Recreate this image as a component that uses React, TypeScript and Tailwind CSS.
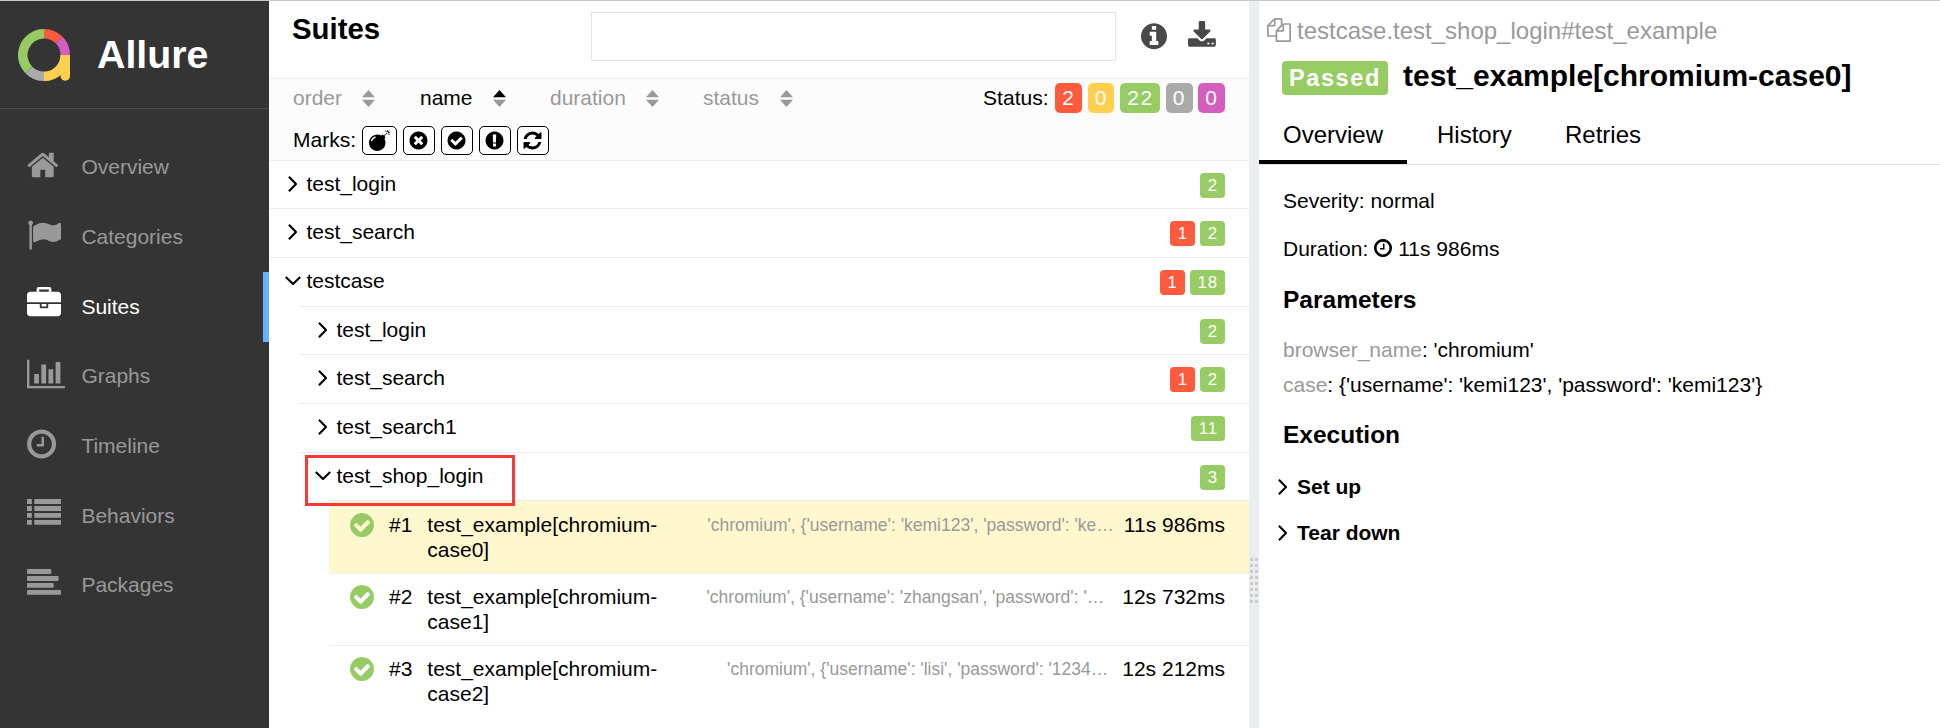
import React from 'react';

const DISC =
  'm768 768q0 209-103 385.5t-279.5 279.5-385.5 103-385.5-103-279.5-279.5-103-385.5 103-385.5 279.5-279.5 385.5-103 385.5 103 279.5 279.5 103 385.5z';
const CIRCLE = `M896 128${DISC}`;

const ICONS = {
  home: 'M1472 992v480q0 26-19 45t-45 19h-384v-384h-256v384h-384q-26 0-45-19t-19-45v-480q0-1 .5-3t.5-3l575-474 575 474q1 2 1 6zm223-69l-62 74q-8 9-21 11h-3q-13 0-21-7l-692-577-692 577q-12 8-24 7-13-2-21-11l-62-74q-8-10-7-23.5t11-21.5l719-599q32-26 76-26t76 26l244 204v-195q0-14 9-23t23-9h192q14 0 23 9t9 23v408l219 182q10 8 11 21.5t-7 23.5z',
  flag: 'M320 256q0 72-64 110v1266q0 13-9.5 22.5t-22.5 9.5h-64q-13 0-22.5-9.5t-9.5-22.5v-1266q-64-38-64-110 0-53 37.5-90.5t90.5-37.5 90.5 37.5 37.5 90.5zm1472 64v763q0 25-12.5 38.5t-39.5 27.5q-215 116-369 116-61 0-123.5-22t-108.5-48-115.5-48-142.5-22q-192 0-464 146-17 9-33 9-26 0-45-19t-19-45v-742q0-32 31-55 21-14 79-43 236-120 421-120 107 0 200 29t219 88q38 19 88 19 54 0 117.5-21t110-47 88-47 54.5-21q26 0 45 19t19 45z',
  briefcase:
    'M640 256h512v-128h-512v128zm1152 640v480q0 66-47 113t-113 47h-1472q-66 0-113-47t-47-113v-480h672v160q0 26 19 45t45 19h320q26 0 45-19t19-45v-160h672zm-768 0v128h-256v-128h256zm768-480v384h-1792v-384q0-66 47-113t113-47h352v-160q0-40 28-68t68-28h576q40 0 68 28t28 68v160h352q66 0 113 47t47 113z',
  chart:
    'M640 896v512h-256v-512h256zm384-512v1024h-256v-1024h256zm1024 1152v128h-2048v-1536h128v1408h1920zm-640-896v768h-256v-768h256zm384-384v1152h-256v-1152h256z',
  clock: `M1024 544v448q0 14-9 23t-23 9h-320q-14 0-23-9t-9-23v-64q0-14 9-23t23-9h224v-352q0-14 9-23t23-9h64q14 0 23 9t9 23zm416 352q0-148-73-273t-198-198-273-73-273 73-198 198-73 273 73 273 198 198 273 73 273-73 198-198 73-273z${CIRCLE}`,
  list: 'M0 160h256v256h-256zM384 160h1408v256h-1408zM0 528h256v256h-256zM384 528h1408v256h-1408zM0 896h256v256h-256zM384 896h1408v256h-1408zM0 1264h256v256h-256zM384 1264h1408v256h-1408z',
  align:
    'M48 160h1184q48 0 48 48v160q0 48-48 48h-1184q-48 0-48-48v-160q0-48 48-48zM48 528h1568q48 0 48 48v160q0 48-48 48h-1568q-48 0-48-48v-160q0-48 48-48zM48 896h1312q48 0 48 48v160q0 48-48 48h-1312q-48 0-48-48v-160q0-48 48-48zM48 1264h1696q48 0 48 48v160q0 48-48 48h-1696q-48 0-48-48v-160q0-48 48-48z',
  info: `M1152 1376v-160q0-14-9-23t-23-9h-96v-512q0-14-9-23t-23-9h-320q-14 0-23 9t-9 23v160q0 14 9 23t23 9h96v320h-96q-14 0-23 9t-9 23v160q0 14 9 23t23 9h448q14 0 23-9t9-23zm-128-896v-160q0-14-9-23t-23-9h-192q-14 0-23 9t-9 23v160q0 14 9 23t23 9h192q14 0 23-9t9-23z${CIRCLE}`,
  download:
    'M1344 1344q0-26-19-45t-45-19-45 19-19 45 19 45 45 19 45-19 19-45zm256 0q0-26-19-45t-45-19-45 19-19 45 19 45 45 19 45-19 19-45zm128-224v320q0 40-28 68t-68 28h-1472q-40 0-68-28t-28-68v-320q0-40 28-68t68-28h465l135 136q58 56 136 56t136-56l136-136h464q40 0 68 28t28 68zm-325-569q17 41-14 70l-448 448q-18 19-45 19t-45-19l-448-448q-31-29-14-70 17-39 59-39h256v-448q0-26 19-45t45-19h256q26 0 45 19t19 45v448h256q42 0 59 39z',
  bomb: 'M571 589q-10-25-34-35t-49 0q-108 44-191 127t-127 191q-10 25 0 49t35 34q13 5 24 5 42 0 60-40 34-84 98.5-148.5t148.5-98.5q25-11 35-35t0-49zm942-356l46 46-244 243 68 68q19 19 19 45.5t-19 45.5l-64 64q89 161 89 343 0 143-55.5 273.5t-150 225-225 150-273.5 55.5-273.5-55.5-225-150-150-225-55.5-273.5 55.5-273.5 150-225 225-150 273.5-55.5q182 0 343 89l64-64q19-19 45.5-19t45.5 19l68 68zm8-56q-10 10-22 10-13 0-23-10l-91-90q-9-10-9-23t9-23q10-9 23-9t23 9l90 91q10 9 10 22.5t-10 22.5zm230 230q-11 9-23 9t-23-9l-90-91q-10-9-10-22.5t10-22.5q9-10 22.5-10t22.5 10l91 90q9 10 9 23t-9 23zm41-183q0 14-9 23t-23 9h-96q-14 0-23-9t-9-23 9-23 23-9h96q14 0 23 9t9 23zm-192-192v96q0 14-9 23t-23 9-23-9-9-23v-96q0-14 9-23t23-9 23 9 9 23zm151 55l-91 90q-10 10-22 10-13 0-23-10-10-9-10-22.5t10-22.5l90-91q10-9 23-9t23 9q9 10 9 23t-9 23z',
  times: `M1277 1122q0-26-19-45l-181-181 181-181q19-19 19-45 0-27-19-46l-90-90q-19-19-46-19-26 0-45 19l-181 181-181-181q-19-19-45-19-27 0-46 19l-90 90q-19 19-19 46 0 26 19 45l181 181-181 181q-19 19-19 45 0 27 19 46l90 90q19 19 46 19 26 0 45-19l181-181 181 181q19 19 45 19 27 0 46-19l90-90q19-19 19-46z${CIRCLE}`,
  check: `M1412 734q0-28-18-46l-91-90q-19-19-45-19t-45 19l-408 407-226-226q-19-19-45-19t-45 19l-91 90q-18 18-18 46 0 27 18 45l362 362q19 19 45 19 27 0 46-19l543-543q18-18 18-45z${CIRCLE}`,
  exclamation: `${CIRCLE}M1024 1375v-190q0-14-9-23.5t-22-9.5h-192q-13 0-23 10t-10 23v190q0 13 10 23t23 10h192q13 0 22-9.5t9-23.5zm-2-344l18-621q0-12-10-18-10-8-24-8h-220q-14 0-24 8-10 6-10 18l17 621q0 10 10 17.5t24 7.5h185q14 0 23.5-7.5t10.5-17.5z`,
  refresh:
    'M1639 1056q0 5-1 7-64 268-268 434.5t-478 166.5q-146 0-282.5-55t-243.5-157l-129 129q-19 19-45 19t-45-19-19-45v-448q0-26 19-45t45-19h448q26 0 45 19t19 45-19 45l-137 137q71 66 161 102t187 36q134 0 250-65t186-179q11-17 53-117 8-23 30-23h192q13 0 22.5 9.5t9.5 22.5zm25-800v448q0 26-19 45t-45 19h-448q-26 0-45-19t-19-45 19-45l138-138q-148-137-349-137-134 0-250 65t-186 179q-11 17-53 117-8 23-30 23h-199q-13 0-22.5-9.5t-9.5-22.5v-7q65-268 270-434.5t480-166.5q146 0 284 55.5t245 156.5l130-129q19-19 45-19t45 19 19 45z',
  files:
    'M1696 384q40 0 68 28t28 68v1216q0 40-28 68t-68 28h-960q-40 0-68-28t-28-68v-288h-544q-40 0-68-28t-28-68v-672q0-40 20-88t48-76l408-408q28-28 76-48t88-20h416q40 0 68 28t28 68v328q68-40 128-40h416zm-544 213l-299 299h299v-299zm-640-384l-299 299h299v-299zm196 647l316-316v-416h-384v416q0 40-28 68t-68 28h-416v640h512v-256q0-40 20-88t48-76zm956 804v-1152h-384v416q0 40-28 68t-68 28h-416v640h896z',
};

type IconName = keyof typeof ICONS;

function Icon({ name, box = '0 0 1792 1792', className }: { name: IconName; box?: string; className: string }) {
  return (
    <svg viewBox={box} className={className} fill="currentColor" fillRule="evenodd" aria-hidden="true">
      <path d={ICONS[name]} />
    </svg>
  );
}

function Logo() {
  return (
    <svg viewBox="0 0 52 52" className="h-[52px] w-[52px] shrink-0" fill="none" strokeWidth="9.5" aria-hidden="true">
      <path d="M26 4.75A21.25 21.25 0 0 1 41.03 10.97" stroke="#fd5a3e" />
      <path d="M41.03 10.97A21.25 21.25 0 0 1 47.25 26" stroke="#d35ebe" />
      <path d="M10.97 41.03A21.25 21.25 0 0 1 26 4.75" stroke="#97cc64" />
      <path d="M26 47.25A21.25 21.25 0 0 1 10.97 41.03" stroke="#aaa" />
      <path d="M47.25 26A21.25 21.25 0 0 1 26 47.25" stroke="#ffd050" />
      <path d="M42.5 26H52V47A4.75 4.75 0 0 1 42.5 47Z" fill="#ffd050" stroke="none" />
    </svg>
  );
}

const NAV: { label: string; icon: IconName; box?: string; wide?: boolean }[] = [
  { label: 'Overview', icon: 'home', box: '64 0 1792 1792' },
  { label: 'Categories', icon: 'flag' },
  { label: 'Suites', icon: 'briefcase' },
  { label: 'Graphs', icon: 'chart', box: '0 0 2048 1792', wide: true },
  { label: 'Timeline', icon: 'clock', box: '128 0 1792 1792' },
  { label: 'Behaviors', icon: 'list' },
  { label: 'Packages', icon: 'align' },
];

function Sidebar() {
  return (
    <aside className="flex w-[269px] shrink-0 flex-col bg-[#343434]">
      <div className="flex h-[108px] items-center gap-[27px] border-b border-[#4d4d4d] pl-[18px]">
        <Logo />
        <span className="text-[39.3px] leading-none font-bold text-white">Allure</span>
      </div>
      <nav className="pt-[23.7px]">
        {NAV.map((item) => {
          const active = item.label === 'Suites';
          return (
            <div
              key={item.label}
              className={
                active
                  ? 'flex h-[69.67px] border-r-[6px] border-[#63b3ff] pl-[27px] text-white'
                  : 'flex h-[69.67px] pl-[27px] text-[#999]'
              }
            >
              <div className="w-[54.4px] shrink-0 pt-[15.3px]">
                <Icon name={item.icon} box={item.box} className={item.wide ? 'h-[34px] w-[38.2px]' : 'h-[34px] w-[34px]'} />
              </div>
              <span className="pt-[22.6px] text-[21px] leading-6">{item.label}</span>
            </div>
          );
        })}
      </nav>
    </aside>
  );
}

function Sorter({ label, up = false, className }: { label: string; up?: boolean; className: string }) {
  return (
    <div className={className}>
      <span>{label}</span>
      <svg viewBox="0 0 13 17" className="mt-1 h-[17px] w-[13px]" aria-hidden="true">
        <path d="M6.5 0L13 7.2H0z" fill={up ? '#000' : '#999'} />
        <path d="M6.5 17L13 9.8H0z" fill="#999" />
      </svg>
    </div>
  );
}

function Mark({ icon }: { icon: IconName }) {
  return (
    <div
      className={
        icon === 'bomb'
          ? 'flex h-[29px] w-[35px] items-center justify-center rounded-[5px] border border-black bg-white'
          : 'flex h-[29px] w-[32px] items-center justify-center rounded-[5px] border border-black bg-white'
      }
    >
      <Icon name={icon} className="h-[21px] w-[21px]" />
    </div>
  );
}

function StatusCount({ n, color }: { n: number; color: string }) {
  return (
    <span className={`flex h-[30px] items-center rounded-[5px] pr-[6.5px] pl-[7.2px] tracking-[1.5px] text-white ${color}`}>{n}</span>
  );
}

function Chevron({ open = false, thin = false }: { open?: boolean; thin?: boolean }) {
  return open ? (
    <svg viewBox="0 0 16 9" className="mt-[18px] h-[9px] w-4" fill="none" stroke="#000" strokeWidth="2.1" aria-hidden="true">
      <path d="M.8.9L8 8L15.2.9" />
    </svg>
  ) : (
    <svg
      viewBox="0 0 9 16"
      className={thin ? 'h-4 w-[9px]' : 'mt-[15px] ml-[3px] h-4 w-[9px]'}
      fill="none"
      stroke="#000"
      strokeWidth="2.1"
      aria-hidden="true"
    >
      <path d="M.9.8L8 8L.9 15.2" />
    </svg>
  );
}

function SuiteRow({
  name,
  failed,
  passed,
  open,
  className,
}: {
  name: string;
  failed?: number;
  passed: number;
  open?: boolean;
  className: string;
}) {
  return (
    <div className={`flex items-start border-[#eceff1] pr-6 ${className}`}>
      <div className="flex w-[21.4px] shrink-0">
        <Chevron open={open} />
      </div>
      <span className="flex-1 pt-[11px] leading-6">{name}</span>
      <div className="flex gap-[5px] pt-3 text-[16.8px] tracking-[1px] text-white">
        {failed ? <span className="flex h-[25px] items-center rounded-[4px] bg-[#fd5a3e] pr-[6.9px] pl-[7.7px]">{failed}</span> : null}
        <span className="flex h-[25px] items-center rounded-[4px] bg-[#97cc64] pr-[6.9px] pl-[7.7px]">{passed}</span>
      </div>
    </div>
  );
}

function CaseRow({
  n,
  name,
  params,
  time,
  className,
  gap,
}: {
  n: number;
  name: string[];
  params: string;
  time: string;
  className: string;
  gap: string;
}) {
  return (
    <div className={`flex items-start pr-6 pl-[21px] leading-[25px] ${className}`}>
      <Icon name="check" box="128 128 1536 1536" className="mt-px h-6 w-6 shrink-0 text-[#97cc64]" />
      <span className="ml-[15px] w-[38.3px] shrink-0">#{n}</span>
      <span className="w-[260px] shrink-0 whitespace-nowrap">
        {name[0]}
        <br />
        {name[1]}
      </span>
      <span className={`flex-1 pt-px text-right text-[17.5px] whitespace-nowrap text-[#999] ${gap}`}>{params}</span>
      <span className="whitespace-nowrap">{time}</span>
    </div>
  );
}

function SuitesPanel() {
  return (
    <section className="relative flex w-[980px] shrink-0 flex-col text-[21px]">
      <div className="flex h-[78px] items-start border-b border-[#eceff1] pl-[22px]">
        <h1 className="w-[300px] pt-[10px] pl-px text-[29.4px] leading-9 font-bold">Suites</h1>
        <div className="mt-[11px] h-[49px] w-[525px] border border-[#e3e3e3] bg-white" />
        <div className="flex pt-5 text-[#484a48]">
          <Icon name="info" box="128 0 1792 1792" className="ml-[25px] h-[30.4px] w-[30.4px]" />
          <Icon name="download" box="64 0 1792 1792" className="ml-[16.6px] h-[30px] w-[30px]" />
        </div>
      </div>
      <div className="flex h-[82px] flex-col border-b border-[#eceff1] bg-[#fcfcfc] pr-6 pl-6">
        <div className="flex h-[43px] items-start">
          <div className="flex flex-1 pt-[7px] leading-6 text-[#999]">
            <Sorter label="order" className="flex w-[127px] gap-5" />
            <Sorter label="name" up className="flex w-[130px] gap-5 text-black" />
            <Sorter label="duration" className="flex w-[153px] gap-5" />
            <Sorter label="status" className="flex gap-[21px]" />
          </div>
          <div className="flex gap-[5.6px] pt-1">
            <span className="pt-[3px] pr-px leading-6">Status:</span>
            <StatusCount n={2} color="bg-[#fd5a3e]" />
            <StatusCount n={0} color="bg-[#ffd050]" />
            <StatusCount n={22} color="bg-[#97cc64]" />
            <StatusCount n={0} color="bg-[#aaa]" />
            <StatusCount n={0} color="bg-[#d35ebe]" />
          </div>
        </div>
        <div className="flex pt-1 leading-6">
          <span className="w-[69px] pt-0.5">Marks:</span>
          <div className="flex gap-[5.9px]">
            <Mark icon="bomb" />
            <Mark icon="times" />
            <Mark icon="check" />
            <Mark icon="exclamation" />
            <Mark icon="refresh" />
          </div>
        </div>
      </div>
      <SuiteRow name="test_login" passed={2} className="h-12 border-b pl-4" />
      <SuiteRow name="test_search" failed={1} passed={2} className="h-[49px] border-b pl-4" />
      <SuiteRow name="testcase" failed={1} passed={18} open className="h-12 pl-4" />
      <div className="ml-[30px] border-t border-[#eceff1]">
        <SuiteRow name="test_login" passed={2} className="h-12 border-b pl-4" />
        <SuiteRow name="test_search" failed={1} passed={2} className="h-[49px] border-b pl-4" />
        <SuiteRow name="test_search1" passed={11} className="h-[49px] border-b pl-4" />
        <SuiteRow name="test_shop_login" passed={3} open className="h-[47px] pl-4" />
        <div className="ml-[30px] border-t border-[#e6ebee]">
          <CaseRow
            n={1}
            name={['test_example[chromium-', 'case0]']}
            params="'chromium', {'username': 'kemi123', 'password': 'ke…"
            time="11s 986ms"
            className="h-[73px] border-b border-[#eceff1] bg-[#fff8ce] pt-[11px]"
            gap="pr-[10px]"
          />
          <CaseRow
            n={2}
            name={['test_example[chromium-', 'case1]']}
            params="'chromium', {'username': 'zhangsan', 'password': '…"
            time="12s 732ms"
            className="h-[72px] border-b border-[#eceff1] pt-[10px]"
            gap="pr-[18px]"
          />
          <CaseRow
            n={3}
            name={['test_example[chromium-', 'case2]']}
            params="'chromium', {'username': 'lisi', 'password': '1234…"
            time="12s 212ms"
            className="h-[72px] pt-[10px]"
            gap="pr-[14px]"
          />
        </div>
      </div>
      <div className="pointer-events-none absolute top-[454px] left-9 h-[51px] w-[210px] border-[3px] border-[#fb3838]" />
    </section>
  );
}

function Gutter() {
  return (
    <div className="flex w-[10px] shrink-0 justify-center bg-[#eaeef1] pt-[557px]">
      <div className="grid h-[45px] grid-cols-2 gap-x-0.5 gap-y-[3px]">
        {Array.from({ length: 16 }, (_, i) => (
          <span key={i} className="h-[3px] w-[3px] bg-[#ccc]" />
        ))}
      </div>
    </div>
  );
}

function DetailPanel() {
  return (
    <section className="flex min-w-0 flex-1 flex-col text-[21px] leading-6">
      <div className="flex h-[52px] items-start pt-[17px] pl-2 text-[#999]">
        <Icon name="files" className="h-6 w-6" />
        <span className="-mt-px pl-1.5 text-[24px] leading-[27px]">testcase.test_shop_login#test_example</span>
      </div>
      <div className="flex h-[65px] items-start pl-[23px]">
        <span className="mt-2 flex h-[34px] w-[106px] items-center rounded-[4px] bg-[#97cc64] pl-[7px] text-[23.5px] font-bold tracking-[1.6px] text-white">
          Passed
        </span>
        <h2 className="pt-[6px] pl-[15px] text-[30px] leading-[34px] font-bold whitespace-nowrap">test_example[chromium-case0]</h2>
      </div>
      <div className="flex h-[47px] border-b border-[#e5e5e5] text-[24px] leading-[27px]">
        <span className="-mb-px h-[46px] w-[148px] border-b-4 border-black pt-[3px] pl-6">Overview</span>
        <span className="w-[128px] pt-[3px] pl-[30px]">History</span>
        <span className="pt-[3px] pl-[30px]">Retries</span>
      </div>
      <div className="flex flex-col pt-6 pl-6">
        <span>Severity: normal</span>
        <div className="flex pt-6">
          <span>Duration:</span>
          <Icon name="clock" box="128 128 1536 1536" className="mt-[2px] ml-[6px] h-[18px] w-[18px]" />
          <span className="pl-[6px]">11s 986ms</span>
        </div>
        <h3 className="pt-[25px] text-[24.5px] leading-[27px] font-bold">Parameters</h3>
        <div className="pt-[25px]">
          <span className="text-[#999]">browser_name</span>: 'chromium'
        </div>
        <div className="pt-[11px]">
          <span className="text-[#999]">case</span>: {"{'username': 'kemi123', 'password': 'kemi123'}"}
        </div>
        <h3 className="pt-6 text-[24.5px] leading-[28px] font-bold">Execution</h3>
        <div className="-ml-[5px] flex items-center gap-[10px] pt-[26px] font-bold">
          <Chevron thin />
          <span>Set up</span>
        </div>
        <div className="-ml-[5px] flex items-center gap-[10px] pt-[22px] font-bold">
          <Chevron thin />
          <span>Tear down</span>
        </div>
      </div>
    </section>
  );
}

export default function App() {
  return (
    <div className="flex h-[728px] w-[1940px] overflow-hidden border-t border-[#c9c9c9] bg-white font-['Liberation_Sans',Arial,sans-serif] text-black">
      <Sidebar />
      <SuitesPanel />
      <Gutter />
      <DetailPanel />
    </div>
  );
}
